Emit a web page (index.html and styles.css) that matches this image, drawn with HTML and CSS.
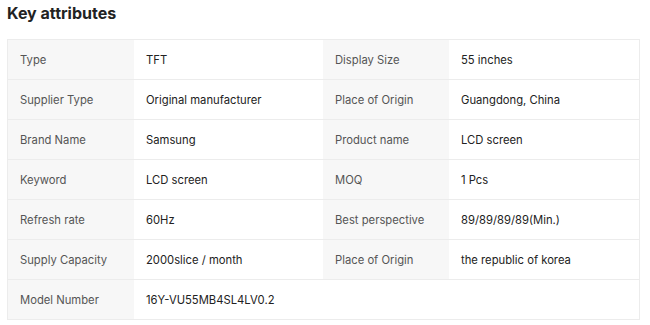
FILE: index.html
```html
<!DOCTYPE html>
<html>
<head>
    <title>Key attributes</title>
    <link rel="stylesheet" href="styles.css">
</head>
<body>
    <div class="attributes">
        <h2>Key attributes</h2>

        <div class="attr-table">
            <div class="attr-row">
                <div class="attr-name">Type</div>
                <div class="attr-value">TFT</div>
                <div class="attr-name">Display Size</div>
                <div class="attr-value">55 inches</div>
            </div>
            <div class="attr-row">
                <div class="attr-name">Supplier Type</div>
                <div class="attr-value">Original manufacturer</div>
                <div class="attr-name">Place of Origin</div>
                <div class="attr-value">Guangdong, China</div>
            </div>
            <div class="attr-row">
                <div class="attr-name">Brand Name</div>
                <div class="attr-value">Samsung</div>
                <div class="attr-name">Product name</div>
                <div class="attr-value">LCD screen</div>
            </div>
            <div class="attr-row">
                <div class="attr-name">Keyword</div>
                <div class="attr-value">LCD screen</div>
                <div class="attr-name">MOQ</div>
                <div class="attr-value">1 Pcs</div>
            </div>
            <div class="attr-row">
                <div class="attr-name">Refresh rate</div>
                <div class="attr-value">60Hz</div>
                <div class="attr-name">Best perspective</div>
                <div class="attr-value">89/89/89/89(Min.)</div>
            </div>
            <div class="attr-row">
                <div class="attr-name">Supply Capacity</div>
                <div class="attr-value">2000slice / month</div>
                <div class="attr-name">Place of Origin</div>
                <div class="attr-value">the republic of korea</div>
            </div>
            <div class="attr-row">
                <div class="attr-name">Model Number</div>
                <div class="attr-value">16Y-VU55MB4SL4LV0.2</div>
            </div>
        </div>
    </div>
</body>
</html>
```

FILE: styles.css
```css
body {
    font-family: Inter, "Noto Sans", sans-serif;
    margin: 0;
    padding: 0 10px 0 7px;
    background: white;
    color: #222;
}

.attributes h2 {
    margin: 2px 0 0;
    height: 37px;
    font-size: 16px;
    font-weight: 700;
    color: #222;
    line-height: 22px;
}

.attr-table {
    border: 1px solid #ececec;
    border-bottom: none;
}

.attr-row {
    display: grid;
    grid-template-columns: 126px 189px 126px 1fr;
    height: 39px;
    border-bottom: 1px solid #ececec;
}

.attr-name,
.attr-value {
    display: flex;
    align-items: center;
    padding: 0 12px;
    font-size: 11.25px;
}

.attr-name {
    background: #f7f7f7;
    color: #555;
}

.attr-value {
    color: #222;
}
```
